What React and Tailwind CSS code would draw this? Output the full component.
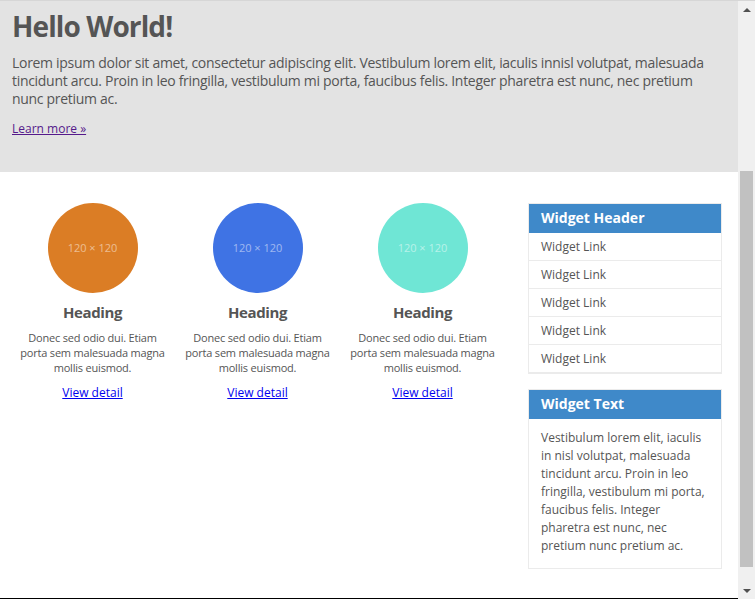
import React from "react"

const features = [
  { color: "bg-[#db7d25]" },
  { color: "bg-[#3f73e4]" },
  { color: "bg-[#6fe6d5]" },
]

const links = ["Widget Link", "Widget Link", "Widget Link", "Widget Link", "Widget Link"]

export default function App() {
  return (
    <div className="flex h-[599px] w-[755px] overflow-hidden border-t border-[#d6d6d6] bg-white font-['Open_Sans',sans-serif] text-[#555]">
      {/* Page */}
      <div className="flex flex-1 flex-col border-b border-black">
        {/* Jumbotron */}
        <div className="h-[171px] shrink-0 bg-[#e3e3e3] pl-3 pr-4 pt-[7px]">
          <h1 className="text-[28px] font-bold leading-[36px] tracking-[-0.9px]">Hello World!</h1>
          <p className="mt-[10px] text-[14px] leading-[18px] tracking-[-0.3px]">
            Lorem ipsum dolor sit amet, consectetur adipiscing elit. Vestibulum lorem elit, iaculis innisl volutpat, malesuada
            tincidunt arcu. Proin in leo fringilla, vestibulum mi porta, faucibus felis. Integer pharetra est nunc, nec pretium
            nunc pretium ac.
          </p>
          <a href="#" className="mt-[13px] inline-block text-[12px] leading-[16px] text-[#551a8b] underline">
            Learn more »
          </a>
        </div>

        {/* Content */}
        <div className="flex pl-[10px] pt-[31px]">
          {features.map((f, i) => (
            <div key={i} className="flex w-[165px] flex-col items-center text-center">
              <div className={`flex h-[90px] w-[90px] items-center justify-center rounded-full ${f.color}`}>
                <span className="text-[11px] text-white/50">120 × 120</span>
              </div>
              <h3 className="mt-[8px] text-[15px] font-bold leading-[22px] tracking-[-0.4px]">Heading</h3>
              <p className="mt-[7px] px-[8px] text-[11px] leading-[15px] tracking-[-0.2px]">
                Donec sed odio dui. Etiam porta sem malesuada magna mollis euismod.
              </p>
              <a href="#" className="mt-[10px] text-[12px] leading-[16px] text-[#0000ee] underline">
                View detail
              </a>
            </div>
          ))}

          {/* Sidebar */}
          <div className="ml-[23px] flex w-[194px] flex-col gap-[15px]">
            <div className="border border-b-2 border-[#ebebeb]">
              <div className="bg-[#3f89c9] px-3 pb-[1px] text-[14px] font-bold leading-[28px] text-white">Widget Header</div>
              {links.map((l, i) => (
                <div
                  key={i}
                  className={`px-3 text-[12px] leading-[27px] ${i < links.length - 1 ? "border-b border-[#ebebeb]" : ""}`}
                >
                  {l}
                </div>
              ))}
            </div>
            <div className="border border-[#ebebeb]">
              <div className="bg-[#3f89c9] px-3 pb-[1px] text-[14px] font-bold leading-[28px] text-white">Widget Text</div>
              <p className="px-3 pb-[13px] pt-[10px] text-[12px] leading-[18px]">
                Vestibulum lorem elit, iaculis in nisl volutpat, malesuada tincidunt arcu. Proin in leo fringilla, vestibulum mi
                porta, faucibus felis. Integer pharetra est nunc, nec pretium nunc pretium ac.
              </p>
            </div>
          </div>
        </div>
      </div>

      {/* Scrollbar */}
      <div className="flex w-[17px] shrink-0 flex-col bg-[#f0f0f0]">
        <div className="flex h-[17px] items-center justify-center">
          <div className="h-0 w-0 border-x-[4px] border-b-[4px] border-x-transparent border-b-[#505050]" />
        </div>
        <div className="h-[153px]" />
        <div className="mx-[2px] h-[396px] bg-[#c1c1c1]" />
        <div className="flex-1" />
        <div className="flex h-[17px] items-center justify-center">
          <div className="h-0 w-0 border-x-[4px] border-t-[4px] border-x-transparent border-t-[#505050]" />
        </div>
      </div>
    </div>
  )
}
